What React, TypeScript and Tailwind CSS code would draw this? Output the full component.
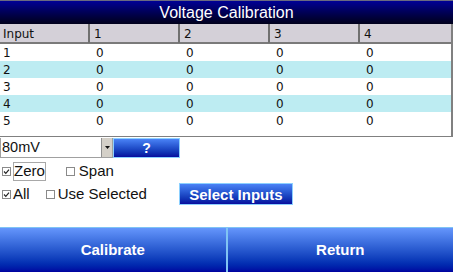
import React from 'react';

const columns = ['Input', '1', '2', '3', '4'];
const rows = [1, 2, 3, 4, 5];

const CheckBox: React.FC<{ checked?: boolean }> = ({ checked }) => (
  <svg width="9" height="9" viewBox="0 0 9 9" className="shrink-0">
    <rect x="0.5" y="0.5" width="8" height="8" fill="#fff" stroke="#8a8a8a" />
    {checked && <path d="M2 4.5 L3.8 6.3 L7 2.6" fill="none" stroke="#222" strokeWidth="1.2" />}
  </svg>
);

const App: React.FC = () => {
  return (
    <div
      className="w-[453px] h-[272px] flex flex-col bg-white overflow-hidden"
      style={{ fontFamily: '"Liberation Sans", Arial, sans-serif' }}
    >
      {/* title */}
      <div className="h-[24px] shrink-0 flex items-center justify-center bg-gradient-to-b from-[#000096] to-[#00001c] border-t border-[#6a6a80] text-white text-[16px] leading-none">
        Voltage Calibration
      </div>

      {/* table frame */}
      <div
        className="h-[113px] shrink-0 border-b border-r-2 border-[#808080] text-[12px] text-[#111]"
        style={{ fontFamily: '"DejaVu Sans", Verdana, sans-serif' }}
      >
        <div className="grid grid-cols-[90px_90px_90px_90px_1fr] h-[20px] bg-[#d4d0d8] border-b-2 border-[#7a7a7a]">
          {columns.map((c, i) => (
            <div
              key={c}
              className={`flex items-center pt-[1px] ${i < columns.length - 1 ? 'border-r-2 border-[#707070]' : ''} ${i > 0 ? 'pl-[4px]' : 'pl-[3px]'}`}
            >
              {c}
            </div>
          ))}
        </div>
        {rows.map((r) => (
          <div
            key={r}
            className={`grid grid-cols-[90px_90px_90px_90px_1fr] h-[17px] items-center ${r % 2 === 0 ? 'bg-[#bdecf2]' : 'bg-white'}`}
          >
            <div className="pl-[3px]">{r}</div>
            <div className="pl-[6px]">0</div>
            <div className="pl-[6px]">0</div>
            <div className="pl-[6px]">0</div>
            <div className="pl-[6px]">0</div>
          </div>
        ))}
      </div>

      {/* controls */}
      <div className="flex flex-col text-[#111]">
        <div className="flex h-[20px] mt-[1px]">
          <div className="w-[113px] flex border border-t-0 border-[#a0a0a0] bg-white">
            <div className="flex-1 flex items-center pl-[1px] text-[14.5px]">80mV</div>
            <div className="w-[11px] bg-[#d4d0c8] border-l border-[#909090] flex items-center justify-center">
              <svg width="5" height="3" viewBox="0 0 5 3">
                <path d="M0 0 H5 L2.5 3 Z" fill="#111" />
              </svg>
            </div>
          </div>
          <button className="w-[67px] h-[20px] bg-gradient-to-b from-[#4a82f6] to-[#0a0a9e] border border-[#8cd0ff] text-white font-bold text-[14px] leading-none">
            ?
          </button>
        </div>

        <div className="flex items-center h-[20px] mt-[3px] text-[15px]">
          <div className="pl-[2px] flex items-center">
            <CheckBox checked />
            <span className="ml-[2px] h-[19px] flex items-center border border-[#a8a8a8]">Zero</span>
          </div>
          <div className="ml-[20px] flex items-center">
            <CheckBox />
            <span className="ml-[4px]">Span</span>
          </div>
        </div>

        <div className="flex items-center h-[22px] mt-[2px] text-[15px]">
          <div className="pl-[2px] flex items-center">
            <CheckBox checked />
            <span className="ml-[2px]">All</span>
          </div>
          <div className="ml-[16px] flex items-center">
            <CheckBox />
            <span className="ml-[3px]">Use Selected</span>
          </div>
          <button className="ml-[32px] w-[114px] h-[22px] bg-gradient-to-b from-[#4a82f6] to-[#0a0a9e] border border-[#8cd0ff] text-white font-bold text-[15px] leading-none">
            Select Inputs
          </button>
        </div>
      </div>

      {/* bottom buttons */}
      <div className="mt-auto h-[45px] flex bg-[#80c4f4] border-t border-[#80c4f4] gap-[2px]">
        <button className="flex-1 bg-gradient-to-b from-[#6596fc] to-[#0000a0] text-white font-bold text-[15px]">
          Calibrate
        </button>
        <button className="flex-1 bg-gradient-to-b from-[#6596fc] to-[#0000a0] text-white font-bold text-[15px]">
          Return
        </button>
      </div>
    </div>
  );
};

export default App;
